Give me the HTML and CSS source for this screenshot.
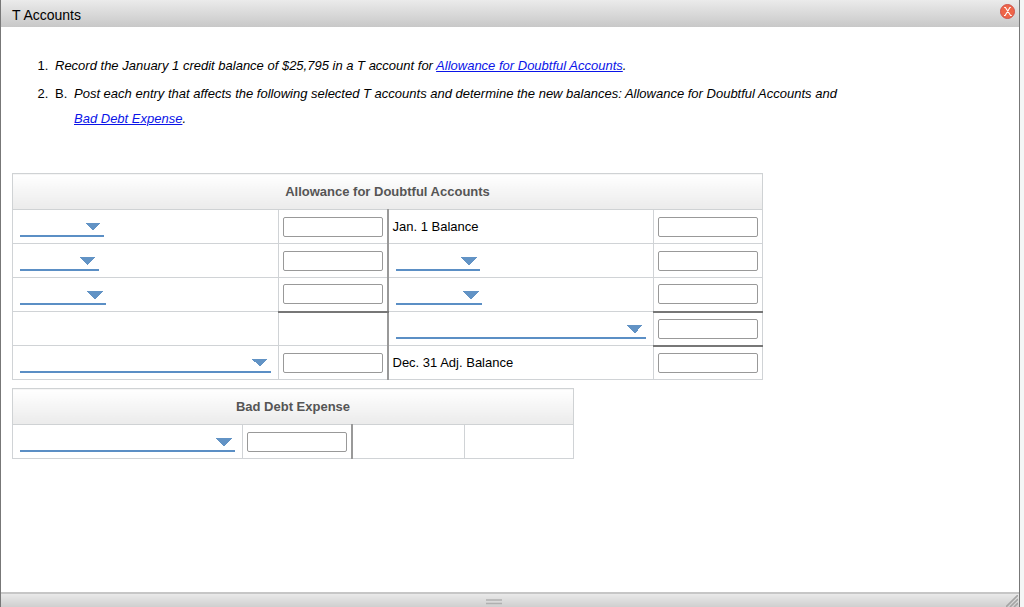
FILE: index.html
```html
<!DOCTYPE html>
<html lang="en">

<head>
    <meta charset="UTF-8">
    <meta name="viewport" content="width=device-width, initial-scale=1.0">
    <title>T Accounts</title>
    <link rel="stylesheet" href="styles.css">
</head>

<body>

    <div class="dialog">
        <header class="titlebar">
            <h1>T Accounts</h1>
            <button type="button" class="close-btn" aria-label="Close">
                <svg width="15" height="15" viewBox="0 0 15 15">
                    <circle cx="7.5" cy="7.5" r="7" fill="#ee6548" stroke="#d0514b" />
                    <path d="M4.2 3.5h1.2l5.2 8h1.2M10.8 3.5H9.9L5.1 11.5H4" fill="none" stroke="#fff" stroke-width="1.1" />
                </svg>
            </button>
        </header>

        <main class="content">
            <ol class="steps">
                <li><em>Record the January 1 credit balance of $25,795 in a T account for <a href="#allowance">Allowance for Doubtful Accounts</a>.</em></li>
                <li>
                    <ol class="sub-steps" start="2">
                        <li><em>Post each entry that affects the following selected T accounts and determine the new balances: Allowance for Doubtful Accounts and <a href="#bad-debt">Bad Debt Expense</a>.</em></li>
                    </ol>
                </li>
            </ol>

            <table class="t-account" id="allowance">
                <colgroup>
                    <col class="col-label">
                    <col class="col-amount">
                    <col class="col-label">
                    <col class="col-amount">
                </colgroup>
                <thead>
                    <tr>
                        <th colspan="4">Allowance for Doubtful Accounts</th>
                    </tr>
                </thead>
                <tbody>
                    <tr>
                        <td><select class="medium" aria-label="Debit entry 1"><option></option></select></td>
                        <td class="stem"><input type="text" aria-label="Debit amount 1"></td>
                        <td class="label">Jan. 1 Balance</td>
                        <td><input type="text" aria-label="Jan. 1 Balance amount"></td>
                    </tr>
                    <tr>
                        <td><select class="small" aria-label="Debit entry 2"><option></option></select></td>
                        <td class="stem"><input type="text" aria-label="Debit amount 2"></td>
                        <td><select class="medium" aria-label="Credit entry 2"><option></option></select></td>
                        <td><input type="text" aria-label="Credit amount 2"></td>
                    </tr>
                    <tr>
                        <td><select class="large" aria-label="Debit entry 3"><option></option></select></td>
                        <td class="stem total"><input type="text" aria-label="Debit amount 3"></td>
                        <td><select class="large" aria-label="Credit entry 3"><option></option></select></td>
                        <td class="total"><input type="text" aria-label="Credit amount 3"></td>
                    </tr>
                    <tr>
                        <td></td>
                        <td class="stem"></td>
                        <td><select class="full" aria-label="Unadjusted balance"><option></option></select></td>
                        <td class="total"><input type="text" aria-label="Unadjusted balance amount"></td>
                    </tr>
                    <tr>
                        <td><select class="full" aria-label="Debit entry 5"><option></option></select></td>
                        <td class="stem"><input type="text" aria-label="Debit amount 5"></td>
                        <td class="label">Dec. 31 Adj. Balance</td>
                        <td><input type="text" aria-label="Dec. 31 Adj. Balance amount"></td>
                    </tr>
                </tbody>
            </table>

            <table class="t-account" id="bad-debt">
                <colgroup>
                    <col class="col-entry">
                    <col class="col-amount">
                    <col class="col-blank">
                    <col class="col-amount">
                </colgroup>
                <thead>
                    <tr>
                        <th colspan="4">Bad Debt Expense</th>
                    </tr>
                </thead>
                <tbody>
                    <tr>
                        <td><select class="full" aria-label="Bad debt entry"><option></option></select></td>
                        <td class="stem"><input type="text" aria-label="Bad debt amount"></td>
                        <td></td>
                        <td></td>
                    </tr>
                </tbody>
            </table>
        </main>

        <footer class="statusbar">
            <svg class="grip" width="16" height="6" viewBox="0 0 16 6">
                <path d="M0 1h16M0 4.5h16" stroke="#b0b0b0" stroke-width="1.6" />
            </svg>
            <svg class="resize" width="12" height="12" viewBox="0 0 12 12">
                <path d="M0 12L12 0M4 12L12 4M8 12L12 8" stroke="#a4a4a4" stroke-width="1.6" />
            </svg>
        </footer>
    </div>

</body>

</html>
```

FILE: styles.css
```css
* {
    box-sizing: border-box;
}

body {
    margin: 0;
    padding-right: 4px;
    background-color: #f4f6f6;
    font-family: "Liberation Sans", Arial, Helvetica, sans-serif;
    font-size: 13px;
    color: #000;
}

.dialog {
    display: flex;
    flex-direction: column;
    min-height: 100vh;
    background-color: #fff;
    border-left: 1px solid #777;
    border-right: 1px solid #777;
}

.titlebar {
    display: flex;
    justify-content: space-between;
    align-items: center;
    height: 27px;
    padding: 0 4px 0 11px;
    background: linear-gradient(#ebebeb, #c8c8c8);
}

.titlebar h1 {
    margin: 2px 0 0;
    font-size: 14px;
    font-weight: normal;
}

.close-btn {
    display: flex;
    margin-bottom: 4px;
    padding: 0;
    border: none;
    background: none;
    cursor: pointer;
}

.content {
    flex: 1;
    padding: 26px 11px;
}

.steps {
    max-width: 850px;
    margin: 0 0 42px;
    padding-left: 40px;
    line-height: 25px;
}

.steps li {
    margin-bottom: 3px;
    padding-left: 3px;
}

.sub-steps {
    padding-left: 16px;
    list-style-type: upper-alpha;
}

.sub-steps li {
    margin-bottom: 0;
}

/* keeps the link on its own line under the sentence */
.sub-steps a {
    white-space: nowrap;
}

a {
    color: #0a14e8;
}

/* T account tables */
.t-account {
    width: min-content;
    table-layout: fixed;
    border-collapse: collapse;
    margin-bottom: 8px;
}

.col-label {
    width: 266px;
}

.col-amount {
    width: 109px;
}

.col-entry {
    width: 230px;
}

.col-blank {
    width: 113px;
}

.t-account th {
    height: 36px;
    padding: 0;
    border: 1px solid #cfd2d4;
    background: linear-gradient(#fff, #ebebeb);
    color: #555;
}

.t-account td {
    height: 34px;
    padding: 0 7px;
    border: 1px solid #d0d3d6;
}

.t-account td:nth-child(even) {
    padding: 0 4px;
}

.t-account td.label {
    padding: 0 4px;
}

.t-account td.stem {
    border-right: 2px solid #999;
}

.t-account td.total {
    border-bottom: 2px solid #777;
}

input[type="text"] {
    display: block;
    width: 100%;
    height: 20px;
    padding: 0 4px;
    border: 1px solid #999;
    border-radius: 2px;
    font: inherit;
}

/* underlined drop-down, the arrow is two half triangles */
select {
    display: block;
    height: 20px;
    margin-top: 1px;
    padding: 0 20px 0 0;
    border: none;
    border-bottom: 2px solid #5b8fc5;
    border-radius: 0;
    appearance: none;
    background-color: transparent;
    background-image: linear-gradient(to top right, transparent 50%, #6293c5 50%),
        linear-gradient(to top left, transparent 50%, #6293c5 50%);
    background-position: right 11px top 6px, right 3px top 6px;
    background-size: 8px 8px;
    background-repeat: no-repeat;
    font: inherit;
}

.small {
    width: 79px;
}

.medium {
    width: 84px;
}

.large {
    width: 86px;
}

.full {
    width: 100%;
}

.statusbar {
    position: relative;
    display: flex;
    justify-content: center;
    align-items: center;
    height: 15px;
    padding-right: 32px;
    border-top: 2px solid #c6c6c6;
    background: linear-gradient(#e9e9e9, #cfcfcf);
}

.grip {
    margin-top: 2px;
}

.resize {
    position: absolute;
    right: 1px;
    bottom: 0;
}
```
